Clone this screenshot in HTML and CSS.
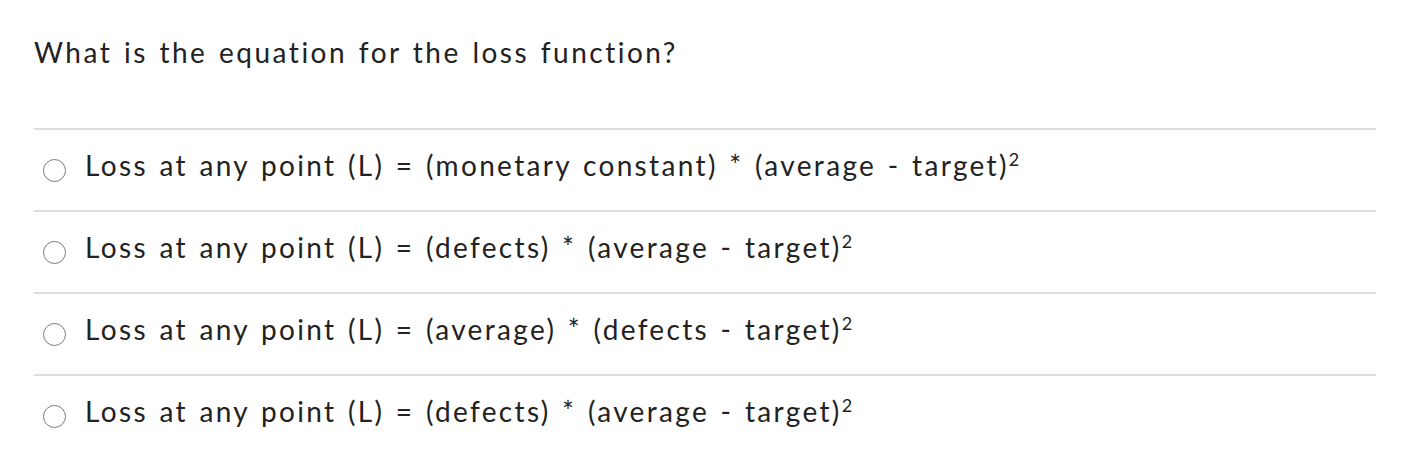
FILE: index.html
```html
<!DOCTYPE html>
<html>
<head>
<meta charset="utf-8">
<link rel="stylesheet" href="styles.css">
</head>
<body>
<div class="question">
  <h1 class="title">What is the equation for the loss function?</h1>
  <ul class="options">
    <li class="option"><span class="radio"></span><span class="label">Loss at any point (L) = (monetary constant) * (average - target)<sup>2</sup></span></li>
    <li class="option"><span class="radio"></span><span class="label">Loss at any point (L) = (defects) * (average - target)<sup>2</sup></span></li>
    <li class="option"><span class="radio"></span><span class="label">Loss at any point (L) = (average) * (defects - target)<sup>2</sup></span></li>
    <li class="option"><span class="radio"></span><span class="label">Loss at any point (L) = (defects) * (average - target)<sup>2</sup></span></li>
  </ul>
</div>
</body>
</html>
```

FILE: styles.css
```css
html, body {
  margin: 0;
  padding: 0;
  background: #fff;
}
body {
  font-family: Lato, "Noto Sans", sans-serif;
  color: #222;
}
.question {
  width: 1342px;
  padding: 28px 0 0 34px;
}
.title {
  margin: 0;
  font-size: 28px;
  font-weight: 400;
  line-height: 48px;
  height: 100px;
  letter-spacing: 2.5px;
  word-spacing: 2px;
}
.options {
  list-style: none;
  margin: 0;
  padding: 0;
}
.option {
  display: flex;
  align-items: center;
  height: 80px;
  border-top: 2px solid #dedede;
}
.radio {
  flex: none;
  box-sizing: border-box;
  width: 23px;
  height: 23px;
  margin-left: 9px;
  border: 1.75px solid #7a7a7a;
  border-radius: 50%;
}
.label {
  margin-left: 19px;
  padding-bottom: 10px;
  font-size: 28px;
  line-height: 36px;
  letter-spacing: 2.35px;
  word-spacing: 2px;
}
.label sup {
  font-size: 18px;
  line-height: 0;
  letter-spacing: 0;
  vertical-align: 10px;
}
```
